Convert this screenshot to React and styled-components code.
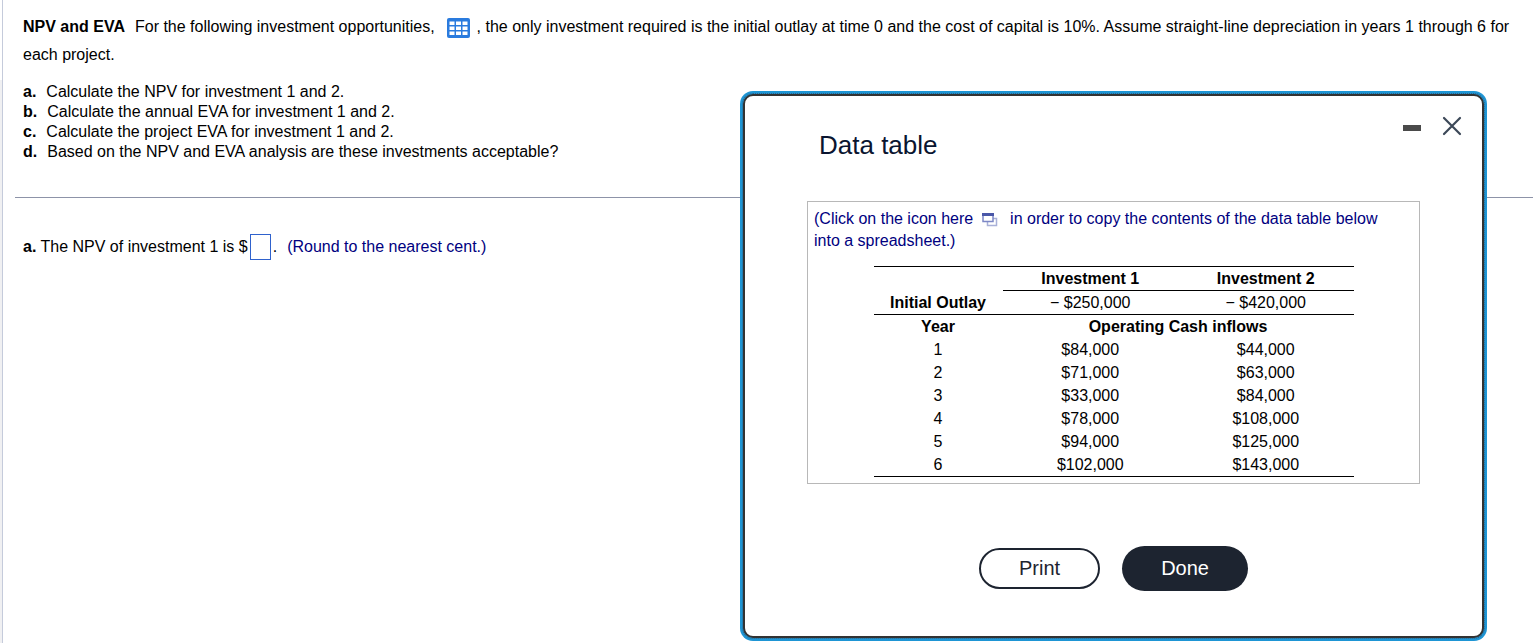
import React from 'react'
import styled, { createGlobalStyle } from 'styled-components'

const GlobalStyle = createGlobalStyle`
    * {
        box-sizing: border-box;
    }
    body {
        margin: 0;
        background: #fff;
        color: #000;
        font-family: "Liberation Sans", Arial, sans-serif;
        font-size: 16px;
    }
`
const Page = styled.div`
    display: flex;
    min-height: 100vh;
`
const Rail = styled.div`
    width: 3px;
    border-right: 1px solid #c5cbdb;
    background: linear-gradient(#fff 80px, #f0f0f2 80px);
`
const Main = styled.main`
    flex: 1;
    padding: 13px 0 0 12px;
`
const Question = styled.section`
    padding: 0 4px 35px 8px;
`
const Intro = styled.p`
    margin: 0;
    line-height: 28px;
`
const Title = styled.b`
    margin-right: 10px;
`
const IconButton = styled.button`
    display: inline-flex;
    padding: 0;
    margin: ${props => props.$margin || '0'};
    border: none;
    background: none;
    vertical-align: middle;
    cursor: pointer;
`
const Parts = styled.ul`
    list-style: none;
    margin: 13px 0 0;
    padding: 0;
    line-height: 20px;
`
const PartLabel = styled.b`
    margin-right: 10px;
`
const Answer = styled.label`
    display: flex;
    align-items: center;
    padding: 36px 8px 0;
    border-top: 1px solid #8d93a8;
    white-space: pre;
`
const AnswerInput = styled.input`
    width: 21px;
    height: 26px;
    margin: 0 2px;
    padding: 1px;
    border: 1px solid #2f62cd;
    font: inherit;
`
const Hint = styled.span`
    margin-left: 10px;
    color: #000080;
`
const Dialog = styled.section`
    position: absolute;
    top: 94px;
    right: 49px;
    width: 741px;
    padding: 30px 62px 45px;
    border: 2px solid #333;
    border-radius: 10px;
    outline: 1px dotted #2d6488;
    background: #fff;
    box-shadow: 0 0 0 3px #1e95d4;
`
const DialogHeader = styled.header`
    display: flex;
    justify-content: space-between;
    align-items: flex-start;
    height: 75px;
    padding-left: 12px;
`
const DialogTitle = styled.h2`
    margin: 4px 0 0;
    color: #0a1530;
    font-size: 26px;
    font-weight: normal;
    line-height: 30px;
`
const WindowControls = styled.div`
    display: flex;
    gap: 21px;
    margin: -10px -42px 0 0;
`
const DataBox = styled.div`
    padding: 6px;
    border: 1px solid #b8b8b8;
`
const CopyNote = styled.p`
    margin: 0 0 14px;
    padding-right: 20px;
    color: #000080;
    line-height: 22px;
`
const Table = styled.table`
    width: 480px;
    margin: 0 auto;
    border-collapse: collapse;
    border-top: 1px solid #000;
    border-bottom: 1px solid #000;
    text-align: center;
    line-height: 22px;
`
const Row = styled.tr`
    height: ${props => (props.$tall ? '24px' : '23px')};
    border-bottom: ${props => (props.$line ? '1px solid #000' : 'none')};
`
const Cell = styled.td`
    padding: 1px 0 0;
    border-bottom: ${props => (props.$line ? '1px solid #000' : 'none')};
`
const HeadCell = styled(Cell).attrs({ as: 'th' })`
    width: ${props => props.$width || 'auto'};
`
const Actions = styled.footer`
    display: flex;
    justify-content: center;
    align-items: center;
    gap: 22px;
    margin-top: 62px;
`
const Button = styled.button`
    padding: ${props => (props.$primary ? '11px 39px' : '7px 38px')};
    border: ${props => (props.$primary ? 'none' : '2px solid #1d2430')};
    border-radius: 24px;
    background: ${props => (props.$primary ? '#1d2430' : '#fff')};
    color: ${props => (props.$primary ? '#fff' : '#1d2430')};
    font-family: inherit;
    font-size: 20px;
    line-height: 23px;
    cursor: pointer;
`

const parts = [
    ['a.', 'Calculate the NPV for investment 1 and 2.'],
    ['b.', 'Calculate the annual EVA for investment 1 and 2.'],
    ['c.', 'Calculate the project EVA for investment 1 and 2.'],
    ['d.', 'Based on the NPV and EVA analysis are these investments acceptable?'],
]

const inflows = [
    ['1', '$84,000', '$44,000'],
    ['2', '$71,000', '$63,000'],
    ['3', '$33,000', '$84,000'],
    ['4', '$78,000', '$108,000'],
    ['5', '$94,000', '$125,000'],
    ['6', '$102,000', '$143,000'],
]

const cells = [0, 1, 2].flatMap(row => [0, 1, 2].map(col => [2.5 + col * 6.5, 3.5 + row * 5]))

const TableIcon = () => (
    <svg width="23" height="20" viewBox="0 0 23 20">
        <rect width="23" height="20" rx="2" fill="#2a7bde" />
        {cells.map(([x, y]) => (
            <rect key={`${x}-${y}`} x={x} y={y} width="5" height="3.5" fill="#fff" />
        ))}
    </svg>
)

const CopyIcon = () => (
    <svg width="16" height="14" viewBox="0 0 16 14">
        <path d="M5.5 5.5h9v7h-9z" fill="#fff" stroke="#a9b1d8" strokeWidth="1.5" />
        <path d="M1 1h10v7.5H1z" fill="#fff" stroke="#7d88c6" strokeWidth="1.5" />
        <path d="M0 0h12v3H0z" fill="#4a57a8" />
    </svg>
)

const MinimizeIcon = () => (
    <svg width="18" height="20" viewBox="0 0 18 20">
        <path d="M0 9h18v6H0z" fill="#4a4a4a" />
    </svg>
)

const CloseIcon = () => (
    <svg width="20" height="20" viewBox="0 0 20 20" fill="none" stroke="#3c4858" strokeWidth="2.2" strokeLinecap="round">
        <path d="M2 2l16 16M18 2L2 18" />
    </svg>
)

function DataTable() {
  return (
    <Table>
        <thead>
            <Row $tall>
                <HeadCell $width="129px" />
                <HeadCell $line>Investment 1</HeadCell>
                <HeadCell $line>Investment 2</HeadCell>
            </Row>
            <Row $tall $line>
                <HeadCell>Initial Outlay</HeadCell>
                <Cell>− $250,000</Cell>
                <Cell>− $420,000</Cell>
            </Row>
            <Row>
                <HeadCell>Year</HeadCell>
                <HeadCell colSpan={2}>Operating Cash inflows</HeadCell>
            </Row>
        </thead>
        <tbody>
            {inflows.map(([year, first, second]) => (
                <Row key={year}>
                    <Cell>{year}</Cell>
                    <Cell>{first}</Cell>
                    <Cell>{second}</Cell>
                </Row>
            ))}
        </tbody>
    </Table>
  )
}

function App() {
  return (
    <>
        <GlobalStyle/>
        <Page>
            <Rail/>
            <Main>
                <Question>
                    <Intro>
                        <Title>NPV and EVA</Title>
                        For the following investment opportunities,{' '}
                        <IconButton $margin="0 2px 0 8px" aria-label="Open data table"><TableIcon/></IconButton>
                        {' '}, the only investment required is the initial outlay at time 0 and the cost of capital is 10%. Assume straight-line depreciation in years 1 through 6 for each project.
                    </Intro>
                    <Parts>
                        {parts.map(([label, text]) => (
                            <li key={label}><PartLabel>{label}</PartLabel>{text}</li>
                        ))}
                    </Parts>
                </Question>
                <Answer>
                    <b>a.</b> The NPV of investment 1 is $<AnswerInput type="text"/>.
                    <Hint>(Round to the nearest cent.)</Hint>
                </Answer>
            </Main>
            <Dialog role="dialog" aria-labelledby="dialog-title">
                <DialogHeader>
                    <DialogTitle id="dialog-title">Data table</DialogTitle>
                    <WindowControls>
                        <IconButton aria-label="Minimize"><MinimizeIcon/></IconButton>
                        <IconButton aria-label="Close"><CloseIcon/></IconButton>
                    </WindowControls>
                </DialogHeader>
                <DataBox>
                    <CopyNote>
                        (Click on the icon here{' '}
                        <IconButton $margin="0 8px 0 4px" aria-label="Copy data table"><CopyIcon/></IconButton>
                        {' '}in order to copy the contents of the data table below into a spreadsheet.)
                    </CopyNote>
                    <DataTable/>
                </DataBox>
                <Actions>
                    <Button>Print</Button>
                    <Button $primary>Done</Button>
                </Actions>
            </Dialog>
        </Page>
    </>
  )
}

export default App
